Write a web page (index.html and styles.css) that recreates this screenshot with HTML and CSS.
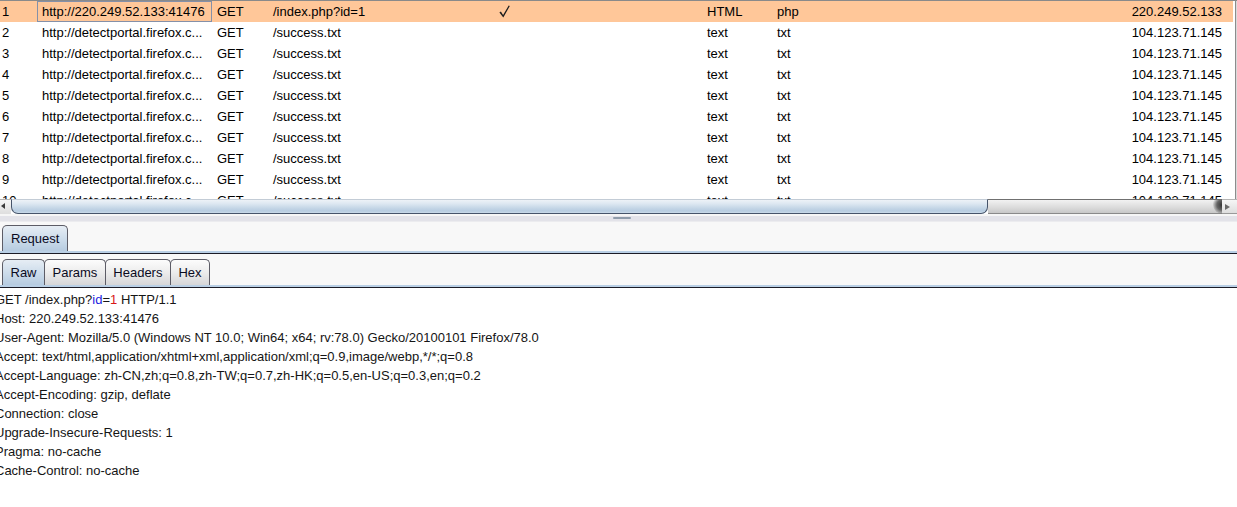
FILE: index.html
```html
<!DOCTYPE html>
<html>
<head>
<meta charset="utf-8">
<link rel="stylesheet" href="styles.css">
</head>
<body>
<div class="app">
  <div class="top-pane">
    <div class="table-area">
      <div class="viewport">
        <div class="row sel">
          <div class="c num">1</div><div class="c host focus">http://220.249.52.133:41476</div><div class="c">GET</div><div class="c">/index.php?id=1</div>
          <div class="c par"><svg class="check" width="11" height="13" viewBox="0 0 11 13"><path d="M0.4 7.6 L1.9 6.6 L4.1 9.9 L9.7 0.4 L10.8 1.1 L4.3 12.6 Z" fill="#1e1e1e"/></svg></div>
          <div class="c"></div><div class="c">HTML</div><div class="c">php</div><div class="c ip">220.249.52.133</div>
        </div>
        <div class="row"><div class="c num">2</div><div class="c host">http://detectportal.firefox.c...</div><div class="c">GET</div><div class="c">/success.txt</div><div class="c"></div><div class="c"></div><div class="c">text</div><div class="c">txt</div><div class="c ip">104.123.71.145</div></div>
        <div class="row"><div class="c num">3</div><div class="c host">http://detectportal.firefox.c...</div><div class="c">GET</div><div class="c">/success.txt</div><div class="c"></div><div class="c"></div><div class="c">text</div><div class="c">txt</div><div class="c ip">104.123.71.145</div></div>
        <div class="row"><div class="c num">4</div><div class="c host">http://detectportal.firefox.c...</div><div class="c">GET</div><div class="c">/success.txt</div><div class="c"></div><div class="c"></div><div class="c">text</div><div class="c">txt</div><div class="c ip">104.123.71.145</div></div>
        <div class="row"><div class="c num">5</div><div class="c host">http://detectportal.firefox.c...</div><div class="c">GET</div><div class="c">/success.txt</div><div class="c"></div><div class="c"></div><div class="c">text</div><div class="c">txt</div><div class="c ip">104.123.71.145</div></div>
        <div class="row"><div class="c num">6</div><div class="c host">http://detectportal.firefox.c...</div><div class="c">GET</div><div class="c">/success.txt</div><div class="c"></div><div class="c"></div><div class="c">text</div><div class="c">txt</div><div class="c ip">104.123.71.145</div></div>
        <div class="row"><div class="c num">7</div><div class="c host">http://detectportal.firefox.c...</div><div class="c">GET</div><div class="c">/success.txt</div><div class="c"></div><div class="c"></div><div class="c">text</div><div class="c">txt</div><div class="c ip">104.123.71.145</div></div>
        <div class="row"><div class="c num">8</div><div class="c host">http://detectportal.firefox.c...</div><div class="c">GET</div><div class="c">/success.txt</div><div class="c"></div><div class="c"></div><div class="c">text</div><div class="c">txt</div><div class="c ip">104.123.71.145</div></div>
        <div class="row"><div class="c num">9</div><div class="c host">http://detectportal.firefox.c...</div><div class="c">GET</div><div class="c">/success.txt</div><div class="c"></div><div class="c"></div><div class="c">text</div><div class="c">txt</div><div class="c ip">104.123.71.145</div></div>
        <div class="row"><div class="c num">10</div><div class="c host">http://detectportal.firefox.c...</div><div class="c">GET</div><div class="c">/success.txt</div><div class="c"></div><div class="c"></div><div class="c">text</div><div class="c">txt</div><div class="c ip">104.123.71.145</div></div>
      </div>
      <div class="vscroll"></div>
    </div>
    <div class="hscroll">
      <div class="arrow left"><span class="tri-left"></span></div>
      <div class="thumb"></div>
      <div class="track"><span class="track-end"></span></div>
      <div class="arrow right"><span class="tri-right"></span></div>
    </div>
  </div>
  <div class="splitter"><div class="grip"></div></div>
  <div class="tabstrip first">
    <div class="tab active">Request</div>
  </div>
  <div class="rule"></div>
  <div class="tabstrip second">
    <div class="tab active">Raw</div><div class="tab">Params</div><div class="tab">Headers</div><div class="tab">Hex</div>
  </div>
  <div class="rule"></div>
  <div class="msg">
    <div class="line">GET /index.php?<span class="pname">id</span>=<span class="pval">1</span> HTTP/1.1</div>
    <div class="line">Host: 220.249.52.133:41476</div>
    <div class="line">User-Agent: Mozilla/5.0 (Windows NT 10.0; Win64; x64; rv:78.0) Gecko/20100101 Firefox/78.0</div>
    <div class="line">Accept: text/html,application/xhtml+xml,application/xml;q=0.9,image/webp,*/*;q=0.8</div>
    <div class="line">Accept-Language: zh-CN,zh;q=0.8,zh-TW;q=0.7,zh-HK;q=0.5,en-US;q=0.3,en;q=0.2</div>
    <div class="line">Accept-Encoding: gzip, deflate</div>
    <div class="line">Connection: close</div>
    <div class="line">Upgrade-Insecure-Requests: 1</div>
    <div class="line">Pragma: no-cache</div>
    <div class="line">Cache-Control: no-cache</div>
  </div>
</div>
</body>
</html>
```

FILE: styles.css
```css
* { box-sizing: border-box; }
html, body { margin: 0; padding: 0; background: #ffffff; }
body {
  font-family: "Liberation Sans", Arial, sans-serif;
  font-size: 13px;
  color: #000;
  width: 1237px;
  height: 507px;
  overflow: hidden;
}
.app { display: flex; flex-direction: column; height: 507px; }

/* ---------- table ---------- */
.top-pane { border-top: 1px solid #8a8a8a; }
.table-area { display: flex; height: 198px; }
.viewport { width: 1233px; height: 198px; overflow: hidden; background: #fff; }
.vscroll {
  width: 4px;
  background: linear-gradient(to right, #ffffff 0 2px, #8c8c8c 2px 3px, #dadada 3px);
}
.row {
  display: grid;
  grid-template-columns: 37px 175px 56px 200px 72px 162px 70px 1fr 150px;
  height: 21px;
  line-height: 21px;
  white-space: nowrap;
}
.row.sel { background: #ffc799; }
.c { padding-left: 5px; overflow: hidden; }
.c.num { padding-left: 2px; }
.c.focus { box-shadow: inset 0 0 0 1px #8590a8; }
.c.par { display: flex; align-items: center; justify-content: center; padding-left: 0; }
.check { display: block; margin-top: 0; }
.c.ip { text-align: right; padding-right: 11px; }

/* ---------- horizontal scrollbar ---------- */
.hscroll { display: flex; height: 15px; }
.arrow {
  position: relative;
  background: linear-gradient(#f6f6f6, #dedede);
  border-top: 1px solid #b5b5b5;
}
.arrow.left { width: 11px; }
.arrow.right { width: 15px; border-bottom: 1px solid #9a9a9a; }
.tri-left {
  position: absolute; left: 1px; top: 3px;
  width: 0; height: 0;
  border-top: 3.5px solid transparent;
  border-bottom: 3.5px solid transparent;
  border-right: 4px solid #3c3c3c;
}
.tri-right {
  position: absolute; left: 3px; top: 4px;
  width: 0; height: 0;
  border-top: 3.5px solid transparent;
  border-bottom: 3.5px solid transparent;
  border-left: 5px solid #6a6a6a;
}
.thumb {
  width: 977px;
  border: 1px solid #46546a;
  border-top: 1px solid #c3ccd6;
  border-radius: 0 0 7px 7px;
  background: linear-gradient(#edf2f7 0%, #dce7f1 30%, #c3d5e6 65%, #b7cce0 85%, #cbdbea 100%);
}
.track {
  flex: 1;
  position: relative;
  border-top: 1px solid #707070;
  border-bottom: 1px solid #8a8a8a;
  background: linear-gradient(#f2f2f2, #dcdcdc 55%, #c8c8c8);
}
.track-end {
  position: absolute; right: 0; top: -1px;
  width: 9px; height: 15px;
  border-radius: 0 0 0 9px;
  background: radial-gradient(circle at 100% 40%, #333 0, #666 40%, rgba(120,120,120,0) 75%);
}

/* ---------- splitter ---------- */
.splitter {
  position: relative;
  height: 8px;
  background: linear-gradient(#f6f6f6 0 2px, #e3e3e9 2px 7px, #ececef 7px);
}
.grip {
  position: absolute; left: 613px; top: 3px;
  width: 18px; height: 2px;
  border-radius: 1px;
  background: #8f9cab;
}

/* ---------- tabs ---------- */
.tabstrip { display: flex; background: #f8f8f8; padding-left: 2px; }
.tabstrip.first { padding-top: 3px; height: 29px; }
.tabstrip.second { padding-top: 5px; height: 31px; }
.tab {
  height: 100%;
  border: 1px solid #5c5c66;
  border-bottom: none;
  border-radius: 5px 5px 0 0;
  line-height: 25px;
  padding: 0 7.5px;
  color: #0a0a1e;
  background: linear-gradient(#fcfcfc, #ececec 50%, #d6d6d8);
  margin-right: -1px;
}
.tab.active { background: linear-gradient(#e6edf4, #cbdbea 55%, #b6cbe0); }
.tabstrip.first .tab { padding: 0 8px; line-height: 25px; }
.rule {
  height: 3px;
  background: linear-gradient(#b9cfe5 0 2px, #1b1b26 2px);
}

/* ---------- message ---------- */
.msg {
  flex: 1;
  background: #fff;
  overflow: hidden;
  padding-top: 2px;
}
.line {
  height: 19px;
  line-height: 19px;
  white-space: nowrap;
  margin-left: -5px;
  color: #151515;
}
.pname { color: #1d1de0; }
.pval { color: #d81818; }
```
